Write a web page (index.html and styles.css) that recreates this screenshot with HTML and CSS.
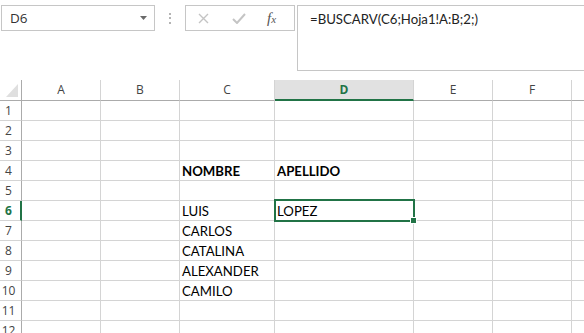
FILE: index.html
```html
<!DOCTYPE html>
<html>
<head>
<meta charset="utf-8">
<link rel="stylesheet" href="styles.css">
</head>
<body>
<div class="toolbar">
  <div class="namebox">
    <span class="nb-text">D6</span>
    <svg class="nb-arrow" width="7" height="4" viewBox="0 0 7 4"><polygon points="0,0 7,0 3.5,4" fill="#6a6a6a"/></svg>
  </div>
  <div class="dots"><i></i><i></i><i></i></div>
  <div class="iconbox">
    <svg class="ic-x" width="11" height="11" viewBox="0 0 11 11"><path d="M1 1 L10 10 M10 1 L1 10" stroke="#c4c4c4" stroke-width="1.4" fill="none"/></svg>
    <svg class="ic-check" width="14" height="11" viewBox="0 0 14 11"><path d="M1 6 L5 10 L13 1" stroke="#c4c4c4" stroke-width="2" fill="none"/></svg>
    <span class="ic-fx"><i>f</i><i class="x">x</i></span>
  </div>
  <div class="formula">=BUSCARV(C6;Hoja1!A:B;2;)</div>
</div>
<div class="sheet">
  <div class="grid">
    <div class="corner"><svg width="12" height="13" viewBox="0 0 12 13"><polygon points="12,0 12,13 0,13" fill="#dfdfdf"/></svg></div>
    <div class="ch">A</div><div class="ch">B</div><div class="ch">C</div><div class="ch sel">D</div><div class="ch">E</div><div class="ch">F</div><div class="ch last"></div>

    <div class="rh">1</div><div class="c"></div><div class="c"></div><div class="c"></div><div class="c"></div><div class="c"></div><div class="c"></div><div class="c last"></div>
    <div class="rh">2</div><div class="c"></div><div class="c"></div><div class="c"></div><div class="c"></div><div class="c"></div><div class="c"></div><div class="c last"></div>
    <div class="rh">3</div><div class="c"></div><div class="c"></div><div class="c"></div><div class="c"></div><div class="c"></div><div class="c"></div><div class="c last"></div>
    <div class="rh">4</div><div class="c"></div><div class="c"></div><div class="c b">NOMBRE</div><div class="c b">APELLIDO</div><div class="c"></div><div class="c"></div><div class="c last"></div>
    <div class="rh">5</div><div class="c"></div><div class="c"></div><div class="c"></div><div class="c"></div><div class="c"></div><div class="c"></div><div class="c last"></div>
    <div class="rh sel">6</div><div class="c"></div><div class="c"></div><div class="c">LUIS</div><div class="c">LOPEZ</div><div class="c"></div><div class="c"></div><div class="c last"></div>
    <div class="rh">7</div><div class="c"></div><div class="c"></div><div class="c">CARLOS</div><div class="c"></div><div class="c"></div><div class="c"></div><div class="c last"></div>
    <div class="rh">8</div><div class="c"></div><div class="c"></div><div class="c">CATALINA</div><div class="c"></div><div class="c"></div><div class="c"></div><div class="c last"></div>
    <div class="rh">9</div><div class="c"></div><div class="c"></div><div class="c">ALEXANDER</div><div class="c"></div><div class="c"></div><div class="c"></div><div class="c last"></div>
    <div class="rh">10</div><div class="c"></div><div class="c"></div><div class="c">CAMILO</div><div class="c"></div><div class="c"></div><div class="c"></div><div class="c last"></div>
    <div class="rh">11</div><div class="c"></div><div class="c"></div><div class="c"></div><div class="c"></div><div class="c"></div><div class="c"></div><div class="c last"></div>
    <div class="rh">12</div><div class="c"></div><div class="c"></div><div class="c"></div><div class="c"></div><div class="c"></div><div class="c"></div><div class="c last"></div>
  </div>
  <div class="selection"></div>
  <div class="handle"></div>
</div>
</body>
</html>
```
FILE: styles.css
```css
html, body {
  margin: 0;
  padding: 0;
  background: #fff;
  overflow: hidden;
}
body {
  width: 584px;
  height: 333px;
  font-family: "Open Sans", "DejaVu Sans", sans-serif;
}
.toolbar {
  height: 80px;
  box-sizing: border-box;
  padding-top: 5px;
  display: flex;
  align-items: flex-start;
}
.namebox {
  margin-left: 1px;
  width: 154px;
  height: 26px;
  box-sizing: border-box;
  border: 1px solid #c6c6c6;
  display: flex;
  align-items: center;
  padding-left: 8px;
}
.nb-text {
  font-size: 13.5px;
  color: #333;
}
.nb-arrow {
  margin-left: auto;
  margin-right: 7px;
}
.dots {
  width: 30px;
  height: 26px;
  display: flex;
  flex-direction: column;
  align-items: center;
  justify-content: center;
  gap: 2.5px;
}
.dots i {
  display: block;
  width: 2px;
  height: 2px;
  background: #b4b4b4;
}
.iconbox {
  width: 110px;
  height: 26px;
  box-sizing: border-box;
  border: 1px solid #c6c6c6;
  display: flex;
  align-items: center;
  padding-left: 12px;
}
.ic-x {
  margin-top: 1px;
}
.ic-check {
  margin-left: 23px;
  margin-top: 1px;
}
.ic-fx {
  margin-left: 21px;
  font-family: "Liberation Serif", "DejaVu Serif", serif;
  font-size: 15px;
  color: #555;
  line-height: 1;
}
.ic-fx i {
  font-style: italic;
}
.ic-fx .x {
  font-size: 11px;
}
.formula {
  margin-left: 2px;
  margin-right: -2px;
  flex: 1;
  height: 66px;
  box-sizing: border-box;
  border: 1px solid #c6c6c6;
  padding: 4px 0 0 12px;
  font-family: Lato, "Open Sans", sans-serif;
  font-size: 13.2px;
  line-height: 18px;
  color: #222;
}
.sheet {
  position: relative;
}
.grid {
  display: grid;
  grid-template-columns: 22px 79px 79px 95px 139px 79px 79px 1fr;
  grid-template-rows: 21px;
  grid-auto-rows: 20px;
}
.grid > div {
  box-sizing: border-box;
  border-right: 1px solid #d4d4d4;
  border-bottom: 1px solid #d4d4d4;
}
.grid > .last {
  border-right: none;
}
.corner {
  display: flex;
  align-items: flex-end;
  padding-left: 6px;
  padding-bottom: 3px;
}
.grid > .corner {
  border-right-color: #ababab;
  border-bottom-color: #ababab;
}
.ch {
  font-size: 12px;
  color: #444;
  text-align: center;
  line-height: 20px;
}
.grid > .ch {
  border-bottom-color: #ababab;
}
.grid > .ch.sel {
  background: #e1e1e1;
  border-bottom: 2px solid #217346;
  color: #217346;
  font-weight: bold;
  line-height: 19px;
}
.rh {
  font-size: 12px;
  color: #444;
  text-align: center;
  padding-right: 4px;
  line-height: 19px;
}
.grid > .rh {
  border-right-color: #ababab;
}
.grid > .rh.sel {
  border-right: 2px solid #217346;
  color: #217346;
  font-weight: bold;
  padding-right: 3px;
}
.c {
  font-family: Lato, "Open Sans", sans-serif;
  font-size: 13.2px;
  line-height: 21px;
  color: #000;
  padding-left: 2px;
  white-space: nowrap;
}
.c.b {
  font-weight: bold;
}
.selection {
  position: absolute;
  left: 274px;
  top: 119px;
  width: 141px;
  height: 23px;
  box-sizing: border-box;
  border: 2px solid #217346;
}
.handle {
  position: absolute;
  left: 410px;
  top: 137px;
  width: 7px;
  height: 7px;
  box-sizing: border-box;
  border: 1px solid #fff;
  background: #217346;
}
```
